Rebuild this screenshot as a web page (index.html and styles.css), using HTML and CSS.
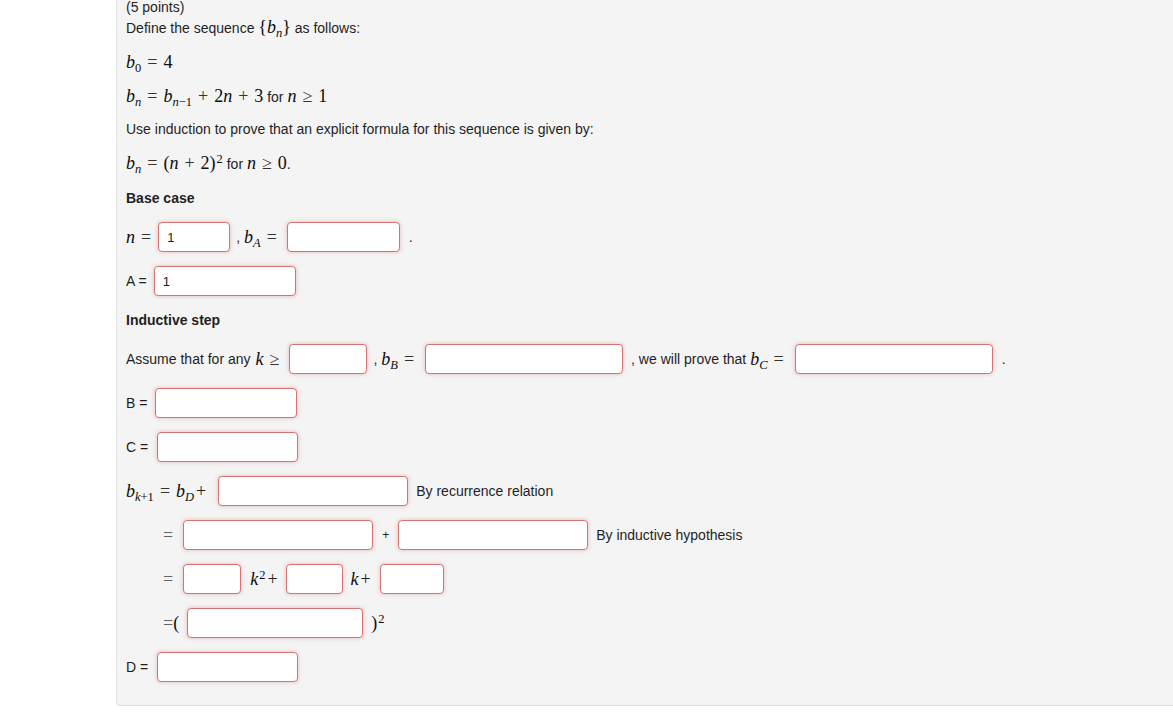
FILE: index.html
```html
<!DOCTYPE html>
<html>
<head>
<meta charset="utf-8">
<link rel="stylesheet" href="styles.css">
</head>
<body>
<div class="panel">
  <div class="line first">(5 points)</div>
  <div class="line define">Define the sequence <span class="m">{<i>b</i><sub><i>n</i></sub>}</span> as follows:</div>
  <div class="line mline g15"><span class="m"><i>b</i><sub>0</sub><span class="op">=</span>4</span></div>
  <div class="line mline g14"><span class="m"><i>b</i><sub><i>n</i></sub><span class="op">=</span><i>b</i><sub><i>n</i>−1</sub><span class="op">+</span>2<i>n</i><span class="op">+</span>3</span> for <span class="m"><i>n</i><span class="op">≥</span>1</span></div>
  <div class="line g13">Use induction to prove that an explicit formula for this sequence is given by:</div>
  <div class="line mline g14"><span class="m"><i>b</i><sub><i>n</i></sub><span class="op">=</span>(<i>n</i><span class="op">+</span>2)<sup>2</sup></span> for <span class="m"><i>n</i><span class="op">≥</span>0</span>.</div>
  <div class="line head g15">Base case</div>

  <div class="row">
    <span class="m"><i>n</i><span class="op">=</span></span>
    <span class="inp w72 ml1">1</span>
    <span class="txt ml6">,</span>
    <span class="m ml4"><i>b</i><sub><i>A</i></sub><span class="op">=</span></span>
    <span class="inp w113 ml4"></span>
    <span class="txt ml9">.</span>
  </div>
  <div class="row">
    <span class="txt">A =</span>
    <span class="inp w142 ml7">1</span>
  </div>

  <div class="line head g14">Inductive step</div>
  <div class="row">
    <span class="txt">Assume that for any</span>
    <span class="m ml5"><i>k</i><span class="op">≥</span></span>
    <span class="inp w78 ml4"></span>
    <span class="txt ml6">,</span>
    <span class="m ml4"><i>b</i><sub><i>B</i></sub><span class="op">=</span></span>
    <span class="inp w198 ml5"></span>
    <span class="txt ml8">, we will prove that</span>
    <span class="m ml4"><i>b</i><sub><i>C</i></sub><span class="op">=</span></span>
    <span class="inp w198 ml5"></span>
    <span class="txt ml9">.</span>
  </div>
  <div class="row">
    <span class="txt">B =</span>
    <span class="inp w142 ml8"></span>
  </div>
  <div class="row">
    <span class="txt">C =</span>
    <span class="inp w141 ml9"></span>
  </div>
  <div class="row">
    <span class="m"><i>b</i><sub><i>k</i>+1</sub><span class="op">=</span><i>b</i><sub><i>D</i></sub><span class="pl">+</span></span>
    <span class="inp w190 ml12"></span>
    <span class="txt ml8">By recurrence relation</span>
  </div>
  <div class="row indent">
    <span class="m"><span class="op0">=</span></span>
    <span class="inp w190 ml10"></span>
    <span class="txt plus">+</span>
    <span class="inp w190"></span>
    <span class="txt ml8">By inductive hypothesis</span>
  </div>
  <div class="row indent">
    <span class="m"><span class="op0">=</span></span>
    <span class="inp w58 ml10"></span>
    <span class="m ml9"><i>k</i><sup>2</sup><span class="pl">+</span></span>
    <span class="inp w57 ml8"></span>
    <span class="m ml8"><i>k</i><span class="pl">+</span></span>
    <span class="inp w64 ml9"></span>
  </div>
  <div class="row indent">
    <span class="m"><span class="op0">=</span>(</span>
    <span class="inp w176 ml8"></span>
    <span class="m ml8">)<sup>2</sup></span>
  </div>
  <div class="row">
    <span class="txt">D =</span>
    <span class="inp w141 ml9"></span>
  </div>
</div>
</body>
</html>
```

FILE: styles.css
```css
html, body {
  margin: 0;
  padding: 0;
  background: #ffffff;
}

body {
  font-family: "Liberation Sans", Arial, sans-serif;
  font-size: 14px;
  color: #1f1f1f;
}

.panel {
  margin-left: 116px;
  background: #f4f4f4;
  border-left: 1px solid #e2e2e2;
  border-bottom: 1px solid #dcdcdc;
  border-bottom-left-radius: 4px;
  padding: 0 0 23px 9px;
}

.line {
  line-height: 20px;
  height: 20px;
  white-space: nowrap;
}

.first {
  line-height: 14px;
  height: 14px;
}

.define { margin-top: 3px; }
.g13 { margin-top: 13px; }
.g14 { margin-top: 14px; }
.g15 { margin-top: 15px; }

.head {
  font-weight: bold;
}

.m {
  font-family: "Liberation Serif", "Times New Roman", serif;
  font-size: 18px;
  color: #0d0d0d;
  white-space: nowrap;
}

.m i {
  font-style: italic;
}

.m sub {
  font-size: 12.5px;
  line-height: 0;
  vertical-align: -4px;
}

.m sup {
  font-size: 12.5px;
  line-height: 0;
  vertical-align: 6px;
  margin-left: 1px;
}

.op {
  margin: 0 6px;
  color: #333;
}

.pl {
  margin-left: 2px;
  color: #222;
}

.op0 {
  color: #666;
}

.row {
  margin-top: 14px;
  height: 30px;
  display: flex;
  align-items: center;
  white-space: nowrap;
}

.indent {
  padding-left: 37px;
}

.txt {
  font-size: 14px;
}

.plus {
  font-size: 12px;
  margin: 0 9px;
}

.inp {
  display: flex;
  align-items: center;
  box-sizing: border-box;
  height: 30px;
  background: #ffffff;
  border: 1px solid #d37474;
  border-radius: 4px;
  box-shadow: 0 0 4px rgba(214, 110, 110, 0.45);
  padding: 0 8px;
  font-size: 13px;
  color: #222;
}

.w57 { width: 57px; }
.w58 { width: 58px; }
.w64 { width: 64px; }
.w72 { width: 72px; }
.w78 { width: 78px; }
.w113 { width: 113px; }
.w141 { width: 141px; }
.w142 { width: 142px; }
.w176 { width: 176px; }
.w190 { width: 190px; }
.w198 { width: 198px; }

.ml1 { margin-left: 1px; }
.ml4 { margin-left: 4px; }
.ml5 { margin-left: 5px; }
.ml6 { margin-left: 6px; }
.ml7 { margin-left: 7px; }
.ml8 { margin-left: 8px; }
.ml9 { margin-left: 9px; }
.ml10 { margin-left: 10px; }
.ml12 { margin-left: 12px; }
```
